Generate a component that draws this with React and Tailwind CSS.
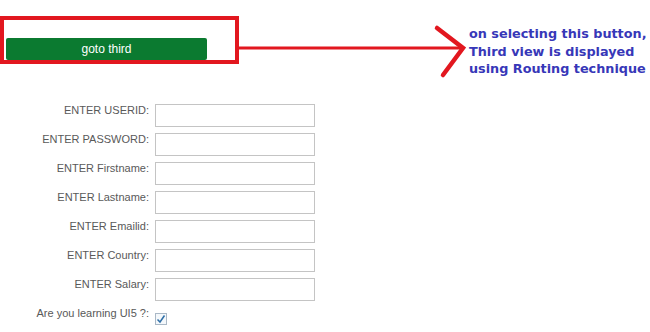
import React from "react";

const fields = [
  "ENTER USERID:",
  "ENTER PASSWORD:",
  "ENTER Firstname:",
  "ENTER Lastname:",
  "ENTER Emailid:",
  "ENTER Country:",
  "ENTER Salary:",
];

export default function App() {
  return (
    <div className="w-[650px] h-[332px] bg-white overflow-hidden font-['Liberation_Sans',Arial,sans-serif]">
      <div className="flex items-start h-[104px] pt-[16px]">
        <div className="w-[239px] h-[48px] border-4 border-[#e2171f] pl-[2px] pt-[16px] shrink-0">
          <button className="w-[201px] h-[22px] bg-[#0b7a30] rounded-[2px] text-white text-[12px] leading-[22px] text-center">
            goto third
          </button>
        </div>
        <svg width="231" height="60" viewBox="0 0 231 60" className="mt-[4px] shrink-0">
          <line x1="0" y1="28" x2="223" y2="28" stroke="#e2171f" strokeWidth="3" />
          <polyline
            points="198,8 224,28 204,55"
            fill="none"
            stroke="#e2171f"
            strokeWidth="4.5"
            strokeLinecap="round"
            strokeLinejoin="miter"
          />
        </svg>
        <div className="mt-[9px] -ml-[1px] whitespace-nowrap font-['DejaVu_Sans',Verdana,sans-serif] font-bold text-[12.8px] leading-[17.5px] text-[#3737b8]">
          <div>on selecting this button,</div>
          <div>Third view is displayed</div>
          <div>using Routing technique</div>
        </div>
      </div>
      <div className="flex flex-col">
        {fields.map((f) => (
          <div key={f} className="flex items-start h-[29px]">
            <div className="w-[149px] text-right text-[11px] leading-[11px] text-[#595959] pt-[1px]">{f}</div>
            <div className="ml-[6px] w-[160px] h-[23px] border border-[#c4c4c4] bg-white" />
          </div>
        ))}
        <div className="flex items-start h-[29px]">
          <div className="w-[149px] text-right text-[11px] leading-[11px] text-[#595959] pt-[1px]">Are you learning UI5 ?:</div>
          <div className="ml-[6px] mt-[6px] w-[12px] h-[12px] border border-[#aab8c6] bg-[#f4f8fb] flex items-center justify-center">
            <svg width="10" height="10" viewBox="0 0 10 10">
              <polyline points="1.5,5.5 4,8 8.5,1.5" fill="none" stroke="#2f6fa8" strokeWidth="1.5" />
            </svg>
          </div>
        </div>
      </div>
    </div>
  );
}
